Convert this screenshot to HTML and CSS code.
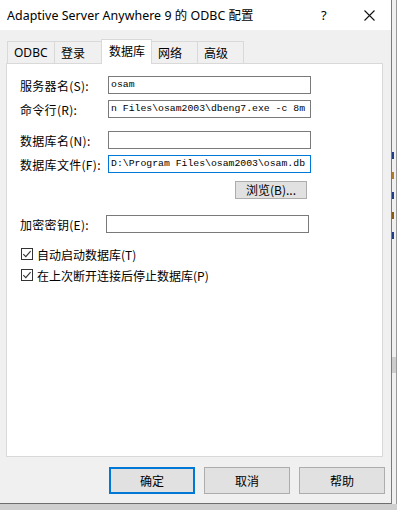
FILE: index.html
```html
<!DOCTYPE html>
<html>
<head>
    <title>Adaptive Server Anywhere 9 的 ODBC 配置</title>
    <link rel="stylesheet" href="styles.css">
</head>
<body>
    <div class="screen">
        <div class="dialog">
            <!-- barra de título -->
            <div class="titlebar">
                <span class="title">Adaptive Server Anywhere 9 的 ODBC 配置</span>
                <span class="help">?</span>
                <span class="close">
                    <svg width="11" height="11" viewBox="0 0 11 11"><path d="M0.5 0.5 L10.5 10.5 M10.5 0.5 L0.5 10.5" stroke="#111" stroke-width="1.1" fill="none"/></svg>
                </span>
            </div>

            <!-- abas -->
            <div class="tabs">
                <div class="tab tab-odbc">ODBC</div>
                <div class="tab tab-login">登录</div>
                <div class="tab tab-active">数据库</div>
                <div class="tab">网络</div>
                <div class="tab">高级</div>
            </div>

            <div class="panel">
                <div class="row row-first">
                    <label class="lbl">服务器名(S):</label>
                    <div class="field">osam</div>
                </div>
                <div class="row row-near">
                    <label class="lbl">命令行(R):</label>
                    <div class="field">n Files\osam2003\dbeng7.exe -c 8m</div>
                </div>
                <div class="row row-far">
                    <label class="lbl">数据库名(N):</label>
                    <div class="field"></div>
                </div>
                <div class="row row-near">
                    <label class="lbl">数据库文件(F):</label>
                    <div class="field field-focus">D:\Program Files\osam2003\osam.db</div>
                </div>
                <div class="row row-browse">
                    <button class="btn-browse">浏览(B)...</button>
                </div>
                <div class="row row-key">
                    <label class="lbl lbl-key">加密密钥(E):</label>
                    <div class="field"></div>
                </div>
                <div class="check check-first">
                    <svg width="12" height="12" viewBox="0 0 12 12"><rect x="0.5" y="0.5" width="11" height="11" fill="#fff" stroke="#333"/><path d="M2.3 6.2 L4.8 8.7 L9.6 3.2" stroke="#333" stroke-width="1.1" fill="none"/></svg>
                    <span>自动启动数据库(T)</span>
                </div>
                <div class="check">
                    <svg width="12" height="12" viewBox="0 0 12 12"><rect x="0.5" y="0.5" width="11" height="11" fill="#fff" stroke="#333"/><path d="M2.3 6.2 L4.8 8.7 L9.6 3.2" stroke="#333" stroke-width="1.1" fill="none"/></svg>
                    <span>在上次断开连接后停止数据库(P)</span>
                </div>
            </div>

            <div class="buttons">
                <button class="btn btn-default">确定</button>
                <button class="btn">取消</button>
                <button class="btn">帮助</button>
            </div>
        </div>

        <!-- janela de trás -->
        <div class="behind">
            <div class="bits">
                <span class="bit b1"></span>
                <span class="bit b2"></span>
                <span class="bit b3"></span>
                <span class="bit b4"></span>
                <span class="bit b5"></span>
            </div>
            <div class="scroll"></div>
        </div>
    </div>
</body>
</html>
```

FILE: styles.css
```css
body {
    margin: 0;
    padding: 0;
    background-color: #cfcfcf;
    font-family: "Noto Sans CJK SC", "Noto Sans", sans-serif;
    font-size: 12px;
    color: #000;
}

.screen {
    display: flex;
    width: 397px;
    height: 510px;
    overflow: hidden;
}

.dialog {
    width: 392px;
    height: 504px;
    flex: none;
    background-color: #f0f0f0;
    border-right: 1px solid #7a7a7a;
    border-bottom: 1px solid #6e6e6e;
    box-sizing: border-box;
}

.titlebar {
    height: 30px;
    background-color: #fff;
    display: flex;
    align-items: center;
    padding-left: 7px;
}

.title {
    font-family: "Noto Sans", "Noto Sans CJK SC", sans-serif;
    font-size: 12.4px;
    letter-spacing: 0.05px;
    color: #000;
    white-space: nowrap;
}

.help {
    margin-left: auto;
    font-family: "Noto Sans", sans-serif;
    font-size: 13px;
    width: 8px;
}

.close {
    display: flex;
    margin-left: 35px;
    margin-right: 16px;
}

.tabs {
    display: flex;
    align-items: flex-end;
    margin-top: 9px;
    padding-left: 7px;
    height: 24px;
}

.tab {
    height: 22px;
    width: 46px;
    box-sizing: border-box;
    border: 1px solid #d9d9d9;
    border-bottom: none;
    border-left: none;
    background-color: #f0f0f0;
    padding-left: 6px;
    line-height: 21px;
    font-size: 12px;
    white-space: nowrap;
}

.tab-odbc {
    width: 48px;
    border-left: 1px solid #d9d9d9;
    font-family: "Noto Sans", sans-serif;
}

.tab-login {
    width: 47px;
}

.tab-active {
    height: 25px;
    width: 51px;
    background-color: #fff;
    border-left: 1px solid #d9d9d9;
    margin-left: -1px;
    margin-bottom: -1px;
    padding-left: 7px;
    line-height: 22px;
    position: relative;
    z-index: 1;
}

.panel {
    margin-left: 6px;
    width: 377px;
    height: 394px;
    box-sizing: border-box;
    background-color: #fff;
    border: 1px solid #d9d9d9;
    padding: 12px 0 0 13px;
}

.row {
    display: flex;
    align-items: center;
    height: 18px;
}

.row-first {
    margin-top: 0;
}

.row-near {
    margin-top: 6px;
}

.row-far {
    margin-top: 13px;
}

.row-browse {
    margin-top: 8px;
}

.row-key {
    margin-top: 16px;
}

.lbl {
    width: 88px;
    flex: none;
    white-space: nowrap;
    font-size: 12px;
    letter-spacing: 0.3px;
}

.lbl-key {
    width: 86px;
}

.field {
    width: 203px;
    height: 18px;
    box-sizing: border-box;
    border: 1px solid #7a7a7a;
    background-color: #fff;
    padding-left: 2px;
    font-family: "Liberation Mono", monospace;
    font-size: 9.8px;
    line-height: 16px;
    white-space: nowrap;
    overflow: hidden;
}

.field-focus {
    border-color: #0078d7;
}

.btn-browse {
    margin-left: 215px;
    width: 72px;
    height: 18px;
    box-sizing: border-box;
    border: 1px solid #adadad;
    background-color: #e1e1e1;
    font-family: "Noto Sans CJK SC", sans-serif;
    font-size: 12px;
    padding: 0;
    line-height: 14px;
}

.check {
    display: flex;
    align-items: center;
    gap: 4px;
    height: 16px;
    margin-top: 5px;
    padding-left: 1px;
    white-space: nowrap;
}

.check svg {
    flex: none;
}

.check-first {
    margin-top: 13px;
}

.buttons {
    display: flex;
    justify-content: flex-end;
    gap: 9px;
    padding-right: 6px;
    margin-top: 10px;
}

.btn {
    width: 86px;
    height: 27px;
    box-sizing: border-box;
    border: 1px solid #adadad;
    background-color: #e1e1e1;
    font-family: "Noto Sans CJK SC", sans-serif;
    font-size: 12px;
    padding: 0;
    color: #000;
}

.btn-default {
    border: 2px solid #0078d7;
}

.behind {
    flex: 1;
    height: 504px;
    background-color: #f0f0f0;
    border-right: 1px solid #9a9a9a;
    display: flex;
    flex-direction: column;
}

.bits {
    margin-top: 152px;
    display: flex;
    flex-direction: column;
    gap: 13px;
}

.bit {
    display: block;
    width: 2px;
    height: 7px;
    background-color: #1f3c88;
}

.b2 {
    background-color: #b07a2a;
}

.b4 {
    background-color: #8a5a10;
}

.scroll {
    margin-top: 118px;
    height: 16px;
    background-color: #cdcdcd;
}
```
